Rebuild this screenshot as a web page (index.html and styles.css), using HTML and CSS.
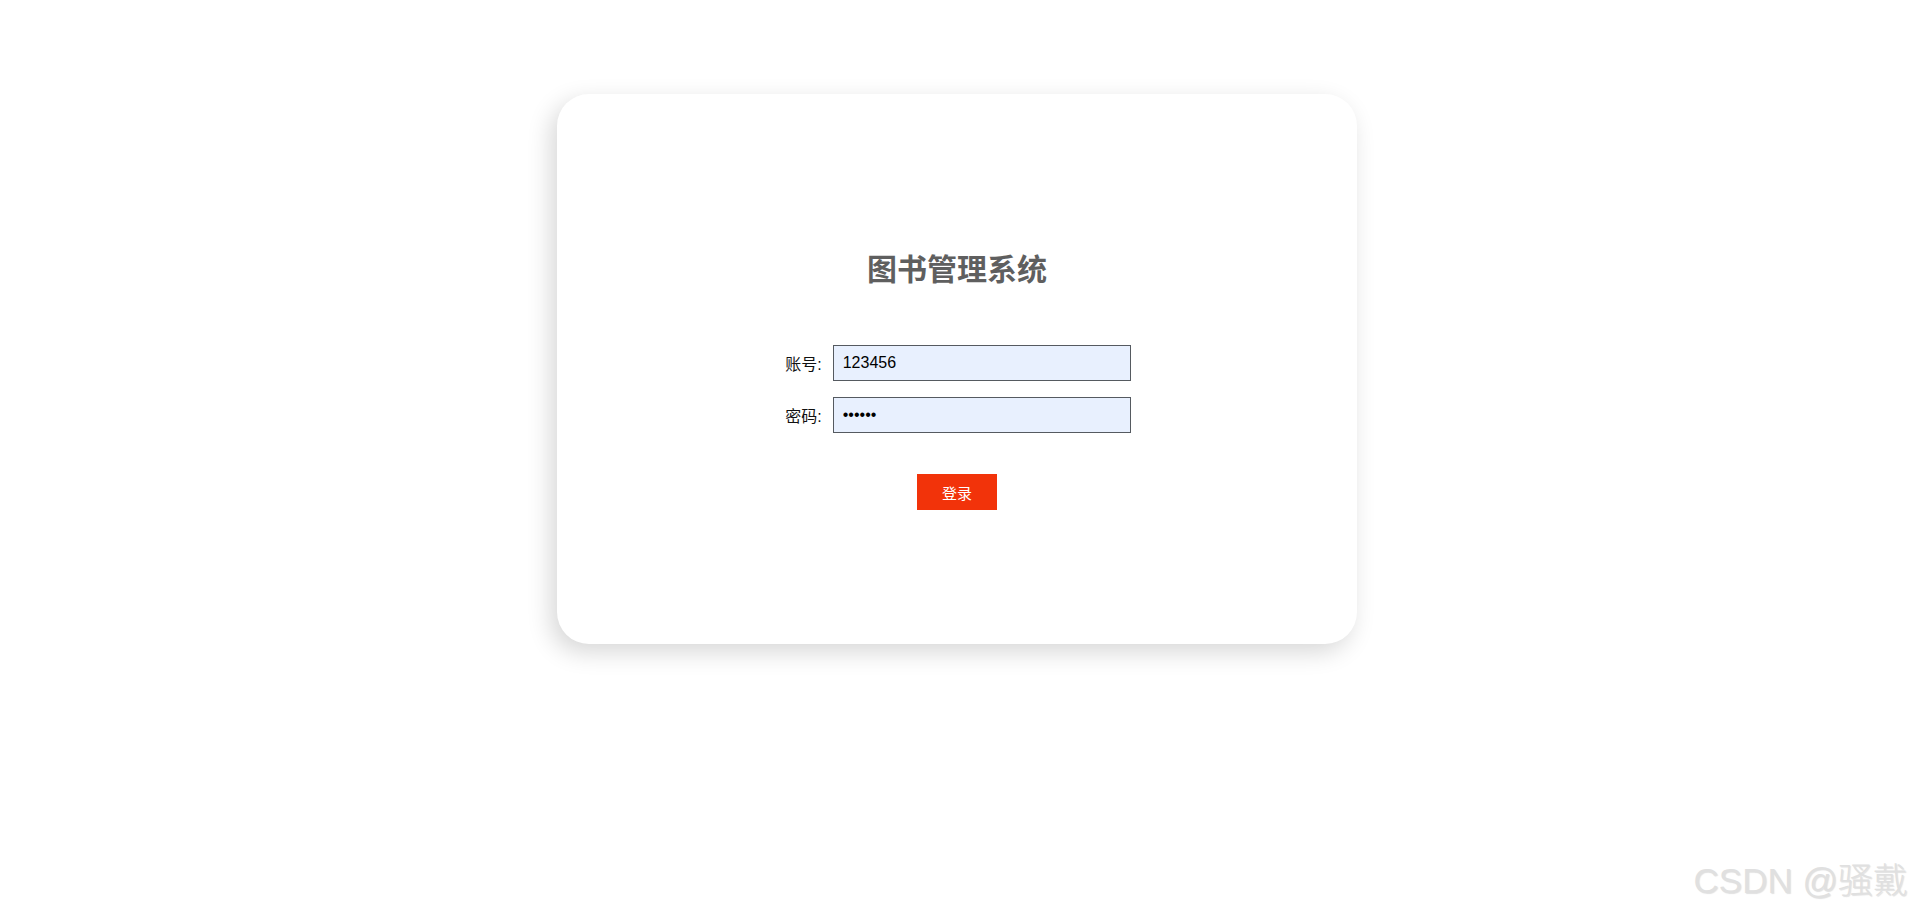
FILE: index.html
```html
<!DOCTYPE html>
<html lang="zh-CN">
<head>
<meta charset="utf-8">
<title>图书管理系统</title>
<link rel="stylesheet" href="styles.css">
</head>
<body>
<div class="card">
  <h1 class="title">图书管理系统</h1>
  <form class="form">
    <div class="row">
      <label class="label">账号:</label>
      <input class="field" type="text" value="123456">
    </div>
    <div class="row">
      <label class="label">密码:</label>
      <input class="field" type="password" value="123456">
    </div>
    <button class="btn" type="button">登录</button>
  </form>
</div>
<div class="watermark">CSDN @骚戴</div>
</body>
</html>
```

FILE: styles.css
```css
html, body {
  margin: 0;
  padding: 0;
  background: #ffffff;
  font-family: "Liberation Sans", "Noto Sans CJK SC", sans-serif;
}

body {
  width: 1914px;
  height: 910px;
  overflow: hidden;
}

.card {
  box-sizing: border-box;
  width: 800px;
  height: 550px;
  margin: 94px auto 0;
  background: #ffffff;
  border-radius: 32px;
  box-shadow: -6px 8px 24px rgba(0, 0, 0, 0.16);
  padding-top: 161px;
  display: flex;
  flex-direction: column;
  align-items: center;
}

.title {
  margin: 0;
  font-family: "Liberation Sans", "Noto Sans CJK SC", sans-serif;
  font-size: 30px;
  line-height: 30px;
  font-weight: 700;
  color: #5f5f5f;
}

.form {
  margin-top: 60px;
  display: flex;
  flex-direction: column;
  align-items: center;
  gap: 16px;
}

.row {
  display: flex;
  align-items: center;
  gap: 11px;
  height: 36px;
  margin-left: 2px;
}

.label {
  font-size: 16px;
  color: #111;
  font-family: "Liberation Sans", "Noto Sans CJK SC", sans-serif;
}

.field {
  box-sizing: border-box;
  width: 298px;
  height: 36px;
  margin: 0;
  padding: 0 9px;
  border: 1px solid #555a60;
  background: #e8f0fe;
  font-family: "Liberation Sans", "Noto Sans CJK SC", sans-serif;
  font-size: 16px;
  color: #000;
  outline: none;
}

.btn {
  margin-top: 25px;
  width: 80px;
  height: 36px;
  border: none;
  background: #f2330a;
  color: #ffffff;
  font-family: "Liberation Sans", "Noto Sans CJK SC", sans-serif;
  font-size: 15px;
  padding: 0;
  cursor: pointer;
}

.watermark {
  position: absolute;
  right: 6px;
  bottom: 9px;
  font-family: "Liberation Sans", "Noto Sans CJK SC", sans-serif;
  font-size: 35px;
  font-weight: 300;
  line-height: 40px;
  color: #e0e0e0;
  text-shadow: 1px 1px 1px rgba(0, 0, 0, 0.12), -1px -1px 0 rgba(255, 255, 255, 0.9);
  white-space: nowrap;
}
```
